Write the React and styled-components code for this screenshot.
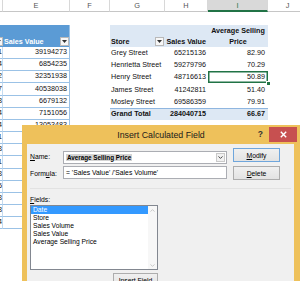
import React from 'react';
import styled, { createGlobalStyle, css } from 'styled-components';

const Global = createGlobalStyle`
  *, *::before, *::after { box-sizing: border-box; }
  html, body { margin: 0; padding: 0; background: #fff; }
  body { width: 300px; height: 281px; overflow: hidden; font-family: "Liberation Sans", Arial, sans-serif; }
`;

const Page = styled.div`
  position: relative;
  width: 300px;
  height: 281px;
  overflow: hidden;
  background: #fff;
`;

const Sheet = styled.div`
  display: grid;
  grid-template-columns: 3px 67px 40px 55px 43px 60px 40px;
  grid-template-rows: 12px 13px 22px repeat(15, 12.17px);
  font-size: 7.2px;
  color: #111;
`;

const ColHead = styled.div`
  display: flex;
  align-items: center;
  justify-content: center;
  font-size: 7.4px;
  color: #555;
  background: #fff;
  border-right: 1px solid #d8d8d8;
  border-bottom: 1px solid #c6c6c6;
  ${(p) =>
    p.$sel &&
    css`
      background: #d9d9d9;
      color: #217346;
      border-bottom: 2px solid #217346;
    `}
`;

const variants = {
  plain: css``,
  tblHead: css`
    background: #5b9bd5;
    color: #fff;
    font-weight: 700;
    line-height: 11px;
    padding-bottom: 0.5px;
  `,
  tblHeadEnd: css`
    background: #5b9bd5;
    color: #fff;
    font-weight: 700;
    line-height: 11px;
    padding-bottom: 0.5px;
    border-right: 1px solid #9bc2e6;
  `,
  tblRow: css`
    border-bottom: 1px solid #9bc2e6;
  `,
  tblRowD: css`
    border-bottom: 1px solid #9bc2e6;
    border-right: 1px solid #c5dbef;
  `,
  tblRowEnd: css`
    border-bottom: 1px solid #9bc2e6;
    border-right: 1px solid #9bc2e6;
  `,
  pvHead: css`
    background: #dde8f4;
    font-weight: 700;
    line-height: 11px;
    padding-bottom: 0.5px;
  `,
  pvTotal: css`
    background: #dde8f4;
    font-weight: 700;
    border-top: 1px solid #8fb6e0;
  `,
};

const Cell = styled.div`
  display: flex;
  align-items: flex-end;
  padding: 0 2px 1px 2px;
  line-height: 10px;
  overflow: hidden;
  white-space: ${(p) => (p.$wrap ? 'normal' : 'nowrap')};
  text-align: ${(p) => (p.$wrap ? 'center' : 'left')};
  justify-content: ${(p) =>
    p.$align === 'right' ? 'flex-end' : p.$align === 'center' ? 'center' : 'flex-start'};
  ${(p) => variants[p.$v || 'plain']}
  ${(p) =>
    p.$sel &&
    css`
      position: relative;
      z-index: 1;
      overflow: visible;
      box-shadow: inset 0 0 0 1.5px #217346;
      &::after {
        content: '';
        position: absolute;
        right: -3px;
        bottom: -3px;
        width: 5px;
        height: 5px;
        background: #217346;
        border: 1px solid #fff;
      }
    `}
`;

const HeadLabel = styled.span`
  flex: ${(p) => (p.$grow ? 1 : 'none')};
  text-align: left;
`;

const FilterBtn = styled.span`
  flex: none;
  width: 9px;
  height: 9px;
  margin-bottom: 1px;
  border: 1px solid #b9b9b9;
  background: #f7f7f7;
  display: flex;
  align-items: center;
  justify-content: center;
`;

const Tri = () => (
  <svg width="5" height="3" viewBox="0 0 5 3">
    <path d="M0 0 H5 L2.5 3 Z" fill="#333" />
  </svg>
);

/* ---------- Dialog ---------- */

const Dialog = styled.div`
  position: absolute;
  left: 22px;
  top: 125px;
  width: 278px;
  height: 165px;
  background: #eec15b;
  display: flex;
  flex-direction: column;
  font-family: "Liberation Sans", Arial, sans-serif;
  color: #000;
`;

const TitleBar = styled.div`
  height: 19px;
  flex: none;
  display: grid;
  grid-template-columns: 1fr auto 1fr;
  align-items: center;
`;

const Title = styled.div`
  font-size: 8.8px;
  color: #1a1a1a;
  white-space: nowrap;
`;

const TitleControls = styled.div`
  display: flex;
  justify-content: flex-end;
  align-items: flex-start;
  align-self: start;
  padding-right: 3px;
  gap: 6px;
`;

const Help = styled.span`
  font-size: 8.5px;
  font-weight: 700;
  color: #333;
  margin-top: 4px;
`;

const CloseBtn = styled.div`
  width: 28px;
  height: 15px;
  margin-top: 2px;
  background: #c75050;
  display: flex;
  align-items: center;
  justify-content: center;
`;

const Client = styled.div`
  flex: 1;
  margin: 0 6px 0 5px;
  background: #f0f0f0;
  display: flex;
  flex-direction: column;
  font-size: 6.8px;
`;

const TopGrid = styled.div`
  display: grid;
  grid-template-columns: 33px 164px 53px;
  grid-template-rows: 16px 14px;
  row-gap: 2px;
  padding: 4px 0 0 3px;
`;

const Label = styled.div`
  white-space: nowrap;
  align-self: center;
  line-height: 9px;
`;

const Key = styled.span`
  text-decoration: underline;
  text-underline-offset: 1px;
`;

const Field = styled.div`
  height: 13px;
  align-self: ${(p) => (p.$end ? 'end' : 'start')};
  border: 1px solid #abadb3;
  background: #fff;
  display: flex;
  align-items: center;
  padding-left: 2px;
  white-space: nowrap;
  overflow: hidden;
`;

const FieldText = styled.span`
  flex: 1;
`;

const SelText = styled.span`
  background: #d4d4d4;
  font-weight: 700;
  font-size: 6.3px;
  padding: 0 1px;
`;

const ComboBtn = styled.span`
  flex: none;
  width: 9px;
  height: 9px;
  margin-right: 1px;
  border: 1px solid #c9c9c9;
  background: #f1f1f1;
  display: flex;
  align-items: center;
  justify-content: center;
`;

const Btn = styled.div`
  width: ${(p) => p.$w}px;
  height: 14px;
  align-self: ${(p) => (p.$end ? 'end' : 'start')};
  justify-self: end;
  border: 1px solid ${(p) => (p.$default ? '#6fa6dc' : '#adadad')};
  background: linear-gradient(#f0f0f0, #e3e3e3);
  display: flex;
  align-items: center;
  justify-content: center;
  font-size: 6.8px;
  white-space: nowrap;
`;

const Separator = styled.div`
  height: 1px;
  margin: 8px 3px 0 3px;
  background: #e2e2e2;
`;

const FieldsLabel = styled.div`
  margin: 6px 0 0 3px;
  line-height: 9px;
`;

const ListWrap = styled.div`
  display: flex;
  flex-direction: column;
  width: 128px;
  margin: 1px 0 0 3px;
`;

const ListBox = styled.div`
  height: 65px;
  border: 1px solid #828790;
  background: #fff;
  display: flex;
`;

const Items = styled.div`
  flex: 1;
  display: flex;
  flex-direction: column;
  font-size: 6.7px;
`;

const Item = styled.div`
  height: 8px;
  line-height: 8px;
  padding-left: 2px;
  white-space: nowrap;
  background: ${(p) => (p.$sel ? '#3399ff' : 'transparent')};
  color: ${(p) => (p.$sel ? '#fff' : '#000')};
`;

const ScrollBar = styled.div`
  width: 9px;
  flex: none;
  background: #f7f7f7;
  display: flex;
  flex-direction: column;
  justify-content: space-between;
  align-items: center;
  padding: 3px 0 2px;
`;

const Chevron = ({ up, color = '#444', w = 5, h = 3 }) => (
  <svg width={w} height={h} viewBox="0 0 5 3">
    <polyline
      points={up ? '0.5,2.6 2.5,0.6 4.5,2.6' : '0.5,0.4 2.5,2.4 4.5,0.4'}
      fill="none"
      stroke={color}
      strokeWidth="0.9"
    />
  </svg>
);

const leftVals = [
  '39194273', '6854235', '32351938', '40538038', '6679132', '7151056', '13053483',
  '5312694', '28937744', '6721903', '40918372', '3381266', '7502139', '25419044', '6190384',
];
const dVals = [
  '2011', '1544', '3672', '4117', '1538', '2214', '1344',
  '1291', '2943', '4421', '1303', '2985', '3513', '1748', '1574',
];
const pivot = [
  ['Grey Street', '65215136', '82.90'],
  ['Henrietta Street', '59279796', '70.29'],
  ['Henry Street', '48716613', '50.89'],
  ['James Street', '41242811', '51.40'],
  ['Mosley Street', '69586359', '79.91'],
];
const fields = ['Date', 'Store', 'Sales Volume', 'Sales Value', 'Average Selling Price'];

export default function App() {
  return (
    <Page>
      <Global />
      <Sheet>
        {['', 'E', 'F', 'G', 'H', 'I', 'J'].map((l, i) => (
          <ColHead key={'h' + i} $sel={l === 'I'}>
            {l}
          </ColHead>
        ))}
        {Array.from({ length: 7 }).map((_, i) => (
          <Cell key={'s' + i} />
        ))}

        <Cell $v="tblHead" $align="right" style={{ padding: 0 }}>
          <FilterBtn>
            <Tri />
          </FilterBtn>
        </Cell>
        <Cell $v="tblHeadEnd" style={{ paddingLeft: 1, paddingRight: 0 }}>
          <HeadLabel $grow>Sales Value</HeadLabel>
          <FilterBtn>
            <Tri />
          </FilterBtn>
        </Cell>
        <Cell />
        <Cell $v="pvHead" style={{ paddingLeft: 1, paddingRight: 1 }}>
          <HeadLabel $grow>Store</HeadLabel>
          <FilterBtn>
            <Tri />
          </FilterBtn>
        </Cell>
        <Cell $v="pvHead" $align="right">Sales Value</Cell>
        <Cell $v="pvHead" $align="center" $wrap>
          Average Selling Price
        </Cell>
        <Cell />

        {leftVals.map((v, i) => {
          const p = pivot[i];
          const total = i === 5;
          return (
            <React.Fragment key={'r' + i}>
              <Cell $v="tblRowD" $align="right" style={{ padding: '0 0 1px 0' }}>
                {dVals[i]}
              </Cell>
              <Cell $v="tblRowEnd" $align="right">
                {v}
              </Cell>
              <Cell />
              {p ? (
                <>
                  <Cell style={{ paddingLeft: 1 }}>{p[0]}</Cell>
                  <Cell $align="right">{p[1]}</Cell>
                  <Cell $align="right" $sel={i === 2} style={{ paddingRight: 3 }}>
                    {p[2]}
                  </Cell>
                </>
              ) : total ? (
                <>
                  <Cell $v="pvTotal" style={{ paddingLeft: 1 }}>Grand Total</Cell>
                  <Cell $v="pvTotal" $align="right">284040715</Cell>
                  <Cell $v="pvTotal" $align="right" style={{ paddingRight: 3 }}>
                    66.67
                  </Cell>
                </>
              ) : (
                <>
                  <Cell />
                  <Cell />
                  <Cell />
                </>
              )}
              <Cell />
            </React.Fragment>
          );
        })}
      </Sheet>

      <Dialog>
        <TitleBar>
          <div />
          <Title>Insert Calculated Field</Title>
          <TitleControls>
            <Help>?</Help>
            <CloseBtn>
              <svg width="7" height="7" viewBox="0 0 7 7">
                <path d="M0.8 0.8 L6.2 6.2 M6.2 0.8 L0.8 6.2" stroke="#fff" strokeWidth="1.4" />
              </svg>
            </CloseBtn>
          </TitleControls>
        </TitleBar>
        <Client>
          <TopGrid>
            <Label>
              <Key>N</Key>ame:
            </Label>
            <Field $end>
              <FieldText>
                <SelText>Average Selling Price</SelText>
              </FieldText>
              <ComboBtn>
                <Chevron color="#333" />
              </ComboBtn>
            </Field>
            <Btn $w={47} $default>
              <Key>M</Key>odify
            </Btn>
            <Label>
              Form<Key>u</Key>la:
            </Label>
            <Field>
              <FieldText>= 'Sales Value' /'Sales Volume'</FieldText>
            </Field>
            <Btn $w={47}>
              <Key>D</Key>elete
            </Btn>
          </TopGrid>
          <Separator />
          <FieldsLabel>
            <Key>F</Key>ields:
          </FieldsLabel>
          <ListWrap>
            <ListBox>
              <Items>
                {fields.map((f, i) => (
                  <Item key={f} $sel={i === 0}>
                    {f}
                  </Item>
                ))}
              </Items>
              <ScrollBar>
                <Chevron up color="#c4c4c4" />
                <Chevron color="#c4c4c4" />
              </ScrollBar>
            </ListBox>
            <Btn $w={45} style={{ alignSelf: 'flex-end', marginTop: 3 }}>
              Insert Field
            </Btn>
          </ListWrap>
        </Client>
      </Dialog>
    </Page>
  );
}
